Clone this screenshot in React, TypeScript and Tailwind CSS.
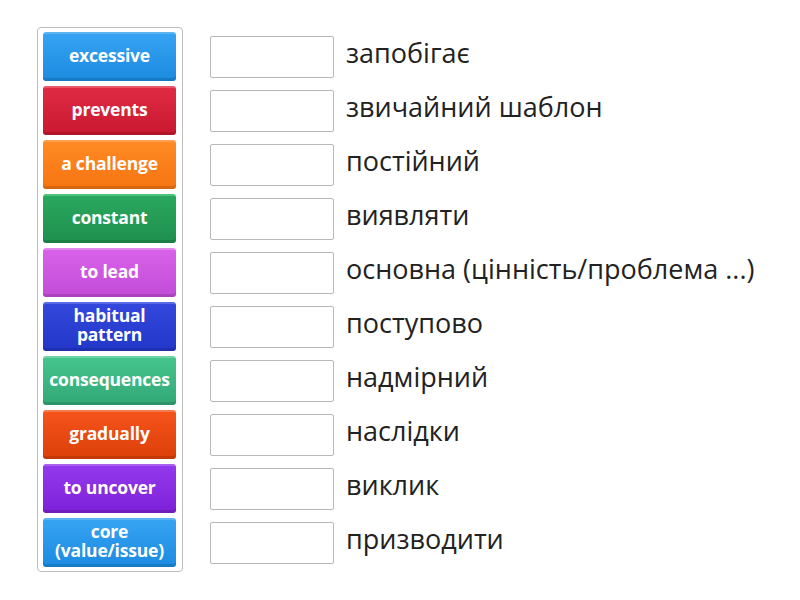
const tiles = [
  { label: "excessive", cls: "bg-gradient-to-b from-[#36a3f2] to-[#1a8ae0] border-[#5bb5f5]" },
  { label: "prevents", cls: "bg-gradient-to-b from-[#e02a44] to-[#c8182f] border-[#e8566a]" },
  { label: "a challenge", cls: "bg-gradient-to-b from-[#ff8a24] to-[#f57410] border-[#ffa050]" },
  { label: "constant", cls: "bg-gradient-to-b from-[#2aa85e] to-[#1f8f4e] border-[#4cc27c]" },
  { label: "to lead", cls: "bg-gradient-to-b from-[#d862e8] to-[#c24bd8] border-[#e388ef]" },
  { label: "habitual pattern", cls: "bg-gradient-to-b from-[#3447dc] to-[#2236c8] border-[#5a6ae6]" },
  { label: "consequences", cls: "bg-gradient-to-b from-[#45c48e] to-[#32a876] border-[#6fd4a8]" },
  { label: "gradually", cls: "bg-gradient-to-b from-[#f5531a] to-[#dc3f08] border-[#f77a4c]" },
  { label: "to uncover", cls: "bg-gradient-to-b from-[#9338ec] to-[#7d20d8] border-[#a860f0]" },
  { label: "core (value/issue)", cls: "bg-gradient-to-b from-[#36a3f2] to-[#1a8ae0] border-[#5bb5f5]" },
];

const answers = [
  "запобігає",
  "звичайний шаблон",
  "постійний",
  "виявляти",
  "основна (цінність/проблема ...)",
  "поступово",
  "надмірний",
  "наслідки",
  "виклик",
  "призводити",
];

export default function App() {
  return (
    <div
      className="w-[800px] h-[600px] bg-white flex items-start pl-[37px] pt-[27px]"
      style={{ fontFamily: '"Open Sans", "Noto Sans", sans-serif' }}
    >
      <div className="border border-[#bdbdbd] rounded-[4px] p-[4px] pl-[5px] pr-[6px] flex flex-col gap-[5px]">
        {tiles.map((t) => (
          <div
            key={t.label}
            className={`w-[133px] h-[49px] rounded-[3px] border-t-2 shadow-[inset_0_-3px_0_rgba(0,0,0,0.12)] flex items-center justify-center text-center text-white font-bold pb-[6px] ${t.cls}`}
          >
            <span
              className={
                t.label.length > 12
                  ? "text-[17.5px] leading-[19px] w-[125px] tracking-[-0.2px]"
                  : "text-[17.5px] leading-[22px] tracking-[-0.2px]"
              }
            >
              {t.label}
            </span>
          </div>
        ))}
      </div>

      <div className="flex flex-col gap-[5px] pt-[5px] ml-[27px]">
        {answers.map((a) => (
          <div key={a} className="h-[49px] flex items-center">
            <div className="w-[124px] h-[42px] border border-[#b8b8b8] rounded-[2px] bg-white" />
            <span className="ml-[12px] text-[27px] text-[#222] leading-none pb-[9px]">{a}</span>
          </div>
        ))}
      </div>
    </div>
  );
}
